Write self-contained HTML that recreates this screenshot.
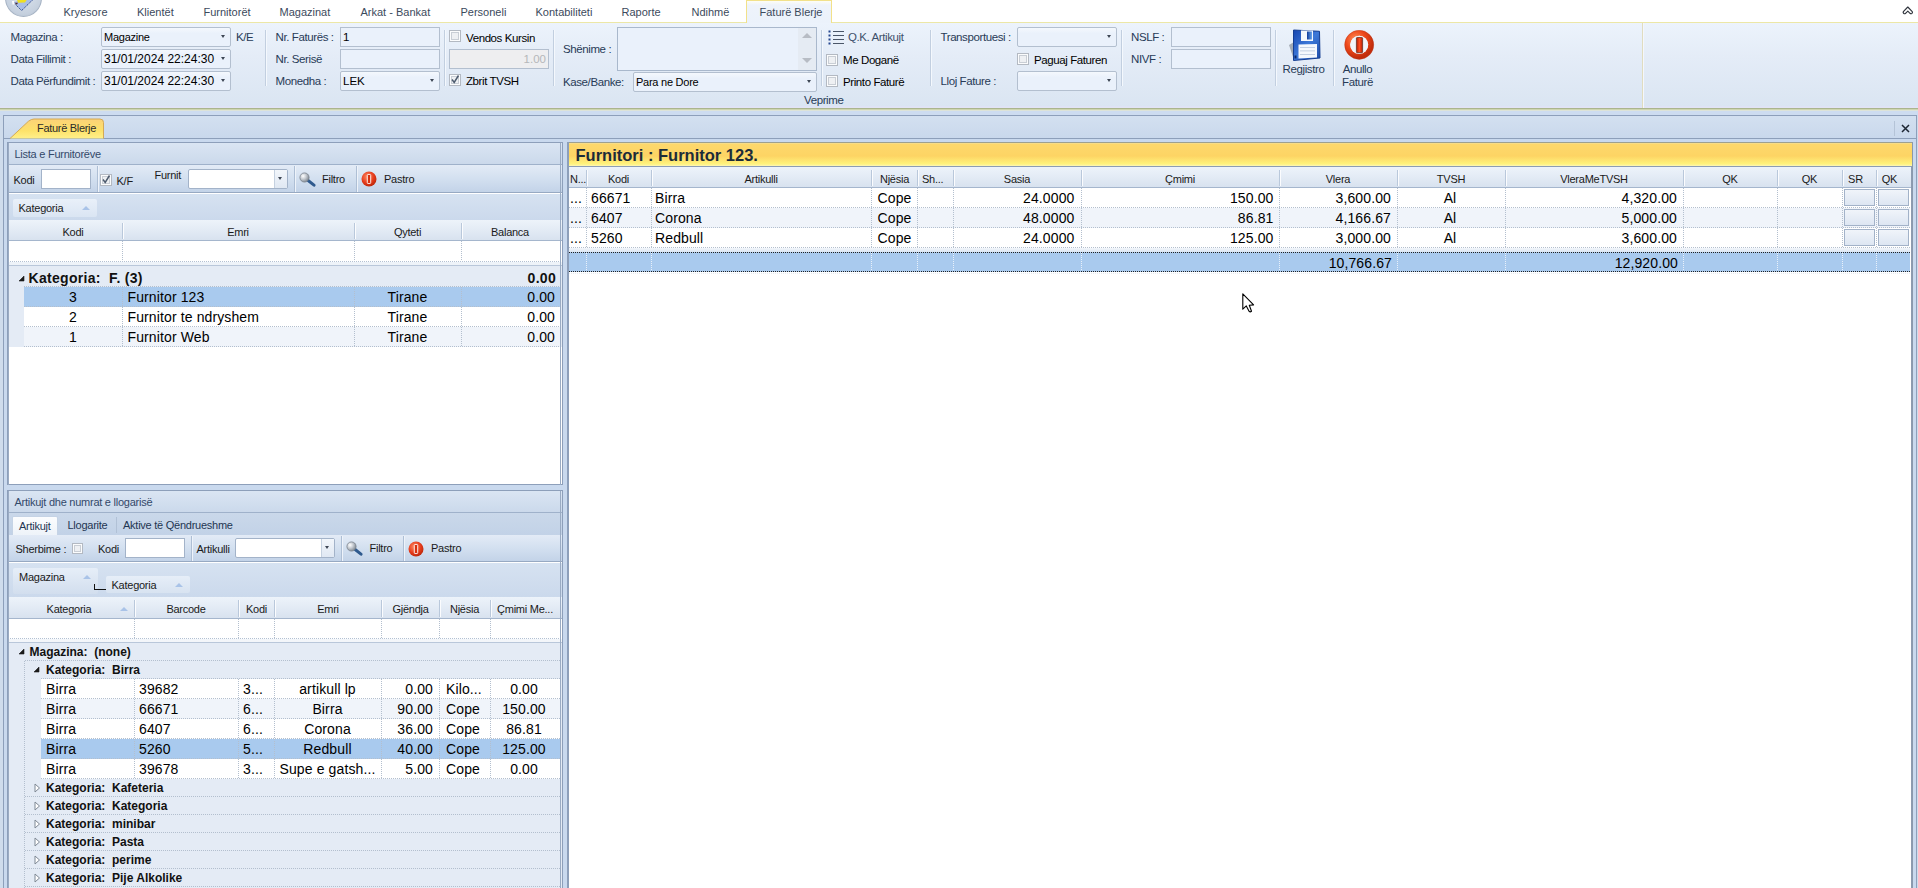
<!DOCTYPE html>
<html><head><meta charset="utf-8"><style>
*{box-sizing:border-box}
html,body{margin:0;padding:0}
body{width:1918px;height:888px;overflow:hidden;position:relative;background:#cfdcec;font-family:"Liberation Sans",sans-serif}
body div{position:absolute}
.t{white-space:pre}
.cb{border:1px solid #a5b3c6;background:linear-gradient(#f4f6f9,#e6eaf0)}
.inp{border:1px solid #a9b8cc;background:#eaf1fb;border-radius:2px}
.inpw{border:1px solid #a9b8cc;background:#fff}
.dd{width:0;height:0;border-left:2.5px solid transparent;border-right:2.5px solid transparent;border-top:3px solid #3d4654}
</style></head><body>
<div style="left:0px;top:0px;width:1918px;height:22px;background:#fff"></div>
<div style="left:5px;top:-21px;width:37px;height:38px;border-radius:50%;background:radial-gradient(circle at 50% 40%,#dde5ef 0%,#c5d0de 70%,#aebbcc 100%);border:1px solid #a6b3c4"></div>
<svg style="position:absolute;left:0px;top:0px" width="46" height="18" viewBox="0 0 46 18">
<path d="M14 2.5 L21.6 10.6 L33 -0.5 L20 -0.5 Z" fill="#a9bde6"/>
<path d="M15.5 4.5 L21.6 10.6 L33 -0.5" fill="none" stroke="#2d4a8a" stroke-width="1" stroke-dasharray="1.5 0.8"/>
<path d="M17 -0.5 L27 -0.5 L25 2.6 L18 2.8 Z" fill="#f0e020"/>
<path d="M14.5 2.8 L18 2.8 L16.8 4.8 Z" fill="#4a2a36"/>
<path d="M12 1 L14 1 L14 4.6 L12.5 4.6 Z" fill="#ffffff" opacity="0.9"/>
</svg>
<div class="t" style="left:63.5px;top:6.5px;font-size:11px;line-height:11px;color:#3c4a5c;">Kryesore</div>
<div class="t" style="left:137px;top:6.5px;font-size:11px;line-height:11px;color:#3c4a5c;">Klientët</div>
<div class="t" style="left:203.5px;top:6.5px;font-size:11px;line-height:11px;color:#3c4a5c;">Furnitorët</div>
<div class="t" style="left:279.5px;top:6.5px;font-size:11px;line-height:11px;color:#3c4a5c;">Magazinat</div>
<div class="t" style="left:360.5px;top:6.5px;font-size:11px;line-height:11px;color:#3c4a5c;">Arkat - Bankat</div>
<div class="t" style="left:460.5px;top:6.5px;font-size:11px;line-height:11px;color:#3c4a5c;">Personeli</div>
<div class="t" style="left:535.5px;top:6.5px;font-size:11px;line-height:11px;color:#3c4a5c;">Kontabiliteti</div>
<div class="t" style="left:621.5px;top:6.5px;font-size:11px;line-height:11px;color:#3c4a5c;">Raporte</div>
<div class="t" style="left:691.5px;top:6.5px;font-size:11px;line-height:11px;color:#3c4a5c;">Ndihmë</div>
<div style="left:746px;top:0px;width:86px;height:24px;border:1px solid #f2e18a;border-bottom:none;background:linear-gradient(#fdfdf6 0px,#eef3fb 4px,#ebf2fb 100%)"></div>
<div class="t" style="left:759.5px;top:6.5px;font-size:11px;line-height:11px;color:#3c4a5c;">Faturë Blerje</div>
<svg style="position:absolute;left:1902px;top:5px" width="12" height="11" viewBox="0 0 12 11"><path d="M1.6 6.3 L5.8 2 L10 6.3 Q11 7.5 9.8 8.5 Q8.9 9.1 8 8.3 L5.8 6.2 L3.6 8.3 Q2.7 9.1 1.8 8.5 Q0.6 7.5 1.6 6.3 Z" fill="#fff" stroke="#2e333b" stroke-width="1.15" stroke-linejoin="round"/></svg>
<div style="left:0px;top:22px;width:746px;height:1px;background:#ece7a6"></div>
<div style="left:832px;top:22px;width:1086px;height:1px;background:#ece7a6"></div>
<div style="left:0px;top:23px;width:1918px;height:85px;background:linear-gradient(#ecf3fc 0%,#e4ecf7 40%,#dae5f2 100%)"></div>
<div style="left:0px;top:106px;width:1918px;height:1px;background:#dfe3f6"></div>
<div style="left:0px;top:107px;width:1918px;height:1px;background:#e2e4f4"></div>
<div style="left:0px;top:108px;width:1918px;height:1px;background:#aab58e"></div>
<div style="left:0px;top:109px;width:1918px;height:1px;background:#cdd5b0"></div>
<div style="left:0px;top:110px;width:1918px;height:1px;background:#dde3d8"></div>
<div style="left:0px;top:111px;width:1918px;height:4px;background:#cddcf0"></div>
<div style="left:265px;top:30px;width:1px;height:56px;background:#c2cfe0"></div>
<div style="left:266px;top:30px;width:1px;height:56px;background:#f4f8fd"></div>
<div style="left:444px;top:30px;width:1px;height:56px;background:#c2cfe0"></div>
<div style="left:445px;top:30px;width:1px;height:56px;background:#f4f8fd"></div>
<div style="left:553px;top:30px;width:1px;height:56px;background:#c2cfe0"></div>
<div style="left:554px;top:30px;width:1px;height:56px;background:#f4f8fd"></div>
<div style="left:821px;top:30px;width:1px;height:56px;background:#c2cfe0"></div>
<div style="left:822px;top:30px;width:1px;height:56px;background:#f4f8fd"></div>
<div style="left:930px;top:30px;width:1px;height:56px;background:#c2cfe0"></div>
<div style="left:931px;top:30px;width:1px;height:56px;background:#f4f8fd"></div>
<div style="left:1121px;top:30px;width:1px;height:56px;background:#c2cfe0"></div>
<div style="left:1122px;top:30px;width:1px;height:56px;background:#f4f8fd"></div>
<div style="left:1275px;top:30px;width:1px;height:56px;background:#c2cfe0"></div>
<div style="left:1276px;top:30px;width:1px;height:56px;background:#f4f8fd"></div>
<div style="left:1333px;top:30px;width:1px;height:56px;background:#c2cfe0"></div>
<div style="left:1334px;top:30px;width:1px;height:56px;background:#f4f8fd"></div>
<div style="left:1642px;top:23px;width:1px;height:85px;background:#e0dcc0"></div>
<div style="left:1643px;top:23px;width:1px;height:85px;background:#f4f7fb"></div>
<div class="t" style="left:10.5px;top:32px;font-size:11.5px;line-height:11.5px;color:#283b57;letter-spacing:-0.4px;">Magazina :</div>
<div class="t" style="left:10.5px;top:54px;font-size:11.5px;line-height:11.5px;color:#283b57;letter-spacing:-0.4px;">Data Fillimit :</div>
<div class="t" style="left:10.5px;top:76px;font-size:11.5px;line-height:11.5px;color:#283b57;letter-spacing:-0.4px;">Data Përfundimit :</div>
<div style="left:101px;top:27px;width:130px;height:20px;border:1px solid #b3bfcf;background:linear-gradient(#f4f8fd,#eaf1fb 30%);border-radius:2px"></div>
<div class="t" style="left:104px;top:32px;font-size:11px;line-height:11px;color:#000;letter-spacing:-0.25px;">Magazine</div>
<div class="dd" style="left:221px;top:35px"></div>
<div style="left:101px;top:49px;width:130px;height:20px;border:1px solid #b3bfcf;background:linear-gradient(#f4f8fd,#eaf1fb 30%);border-radius:2px"></div>
<div class="t" style="left:104px;top:53px;font-size:12px;line-height:12px;color:#000;">31/01/2024 22:24:30</div>
<div class="dd" style="left:221px;top:57px"></div>
<div style="left:101px;top:71px;width:130px;height:20px;border:1px solid #b3bfcf;background:linear-gradient(#f4f8fd,#eaf1fb 30%);border-radius:2px"></div>
<div class="t" style="left:104px;top:75px;font-size:12px;line-height:12px;color:#000;">31/01/2024 22:24:30</div>
<div class="dd" style="left:221px;top:79px"></div>
<div class="t" style="left:236px;top:32px;font-size:11.5px;line-height:11.5px;color:#283b57;letter-spacing:-0.4px;">K/E</div>
<div class="t" style="left:275.5px;top:32px;font-size:11.5px;line-height:11.5px;color:#283b57;letter-spacing:-0.4px;">Nr. Faturës :</div>
<div class="t" style="left:275.5px;top:54px;font-size:11.5px;line-height:11.5px;color:#283b57;letter-spacing:-0.4px;">Nr. Serisë</div>
<div class="t" style="left:275.5px;top:76px;font-size:11.5px;line-height:11.5px;color:#283b57;letter-spacing:-0.4px;">Monedha :</div>
<div style="left:340px;top:27px;width:100px;height:20px;border:1px solid #b3bfcf;background:#eaf1fb"></div>
<div class="t" style="left:343px;top:32px;font-size:11.5px;line-height:11.5px;color:#000;">1</div>
<div style="left:340px;top:49px;width:100px;height:20px;border:1px solid #b3bfcf;background:#eaf1fb"></div>
<div style="left:340px;top:71px;width:100px;height:20px;border:1px solid #b3bfcf;background:linear-gradient(#f4f8fd,#eaf1fb 30%);border-radius:2px"></div>
<div class="t" style="left:343px;top:76px;font-size:11.5px;line-height:11.5px;color:#000;">LEK</div>
<div class="dd" style="left:430px;top:79px"></div>
<div style="left:449px;top:30px;width:12px;height:12px;border:1px solid #b3b9c2;background:#eef0f3;box-shadow:inset 0 0 0 1px #fbfcfd,inset 0 0 0 2px #c9ced5"></div>
<div class="t" style="left:466px;top:33px;font-size:11.5px;line-height:11.5px;color:#000;letter-spacing:-0.4px;">Vendos Kursin</div>
<div style="left:449px;top:49px;width:100px;height:20px;border:1px solid #b3bfcf;background:#eeeef0"></div>
<div class="t" style="left:446px;top:54px;width:100px;text-align:right;font-size:11.5px;line-height:11.5px;color:#b5b7ba;">1.00</div>
<div style="left:449px;top:74px;width:12px;height:12px;border:1px solid #b3b9c2;background:#eef0f3;box-shadow:inset 0 0 0 1px #fbfcfd,inset 0 0 0 2px #c9ced5"></div>
<svg style="position:absolute;left:450px;top:74px" width="10" height="11" viewBox="0 0 10 11"><path d="M2 5.5 L4.2 8.5 L8.5 1.5" fill="none" stroke="#4d5b6e" stroke-width="1.5"/></svg>
<div class="t" style="left:466px;top:76px;font-size:11.5px;line-height:11.5px;color:#000;letter-spacing:-0.4px;">Zbrit TVSH</div>
<div class="t" style="left:563px;top:44px;font-size:11.5px;line-height:11.5px;color:#283b57;letter-spacing:-0.4px;">Shënime :</div>
<div style="left:617px;top:27px;width:200px;height:44px;border:1px solid #a9b8cc;background:#eaf1fb"></div>
<div style="left:798px;top:28px;width:18px;height:42px;background:#e5ebf3"></div>
<div style="left:802px;top:33px;width:0;height:0;border-left:5px solid transparent;border-right:5px solid transparent;border-bottom:5px solid #b7bcc4"></div>
<div style="left:802px;top:58px;width:0;height:0;border-left:5px solid transparent;border-right:5px solid transparent;border-top:5px solid #b7bcc4"></div>
<div class="t" style="left:563px;top:77px;font-size:11.5px;line-height:11.5px;color:#283b57;letter-spacing:-0.4px;">Kase/Banke:</div>
<div style="left:633px;top:72px;width:184px;height:20px;border:1px solid #b3bfcf;background:linear-gradient(#f4f8fd,#eaf1fb 30%);border-radius:2px"></div>
<div class="t" style="left:636px;top:77px;font-size:11px;line-height:11px;color:#000;letter-spacing:-0.25px;">Para ne Dore</div>
<div class="dd" style="left:807px;top:80px"></div>
<div class="t" style="left:804px;top:95px;font-size:11.5px;line-height:11.5px;color:#283b57;letter-spacing:-0.4px;">Veprime</div>
<svg style="position:absolute;left:828px;top:30px" width="17" height="16" viewBox="0 0 17 16"><g fill="#24468f"><rect x="0.5" y="0.5" width="2" height="2"/><rect x="0.5" y="4.5" width="2" height="2"/><rect x="0.5" y="8.5" width="2" height="2"/><rect x="0.5" y="12.5" width="2" height="2"/></g><g fill="#4a5668"><rect x="5" y="1" width="11" height="1"/><rect x="5" y="5" width="11" height="1"/><rect x="5" y="9" width="11" height="1"/><rect x="5" y="13" width="11" height="1"/></g></svg>
<div class="t" style="left:848px;top:32px;font-size:11.5px;line-height:11.5px;color:#3f516b;letter-spacing:-0.4px;">Q.K. Artikujt</div>
<div style="left:826px;top:54px;width:12px;height:12px;border:1px solid #b3b9c2;background:#eef0f3;box-shadow:inset 0 0 0 1px #fbfcfd,inset 0 0 0 2px #c9ced5"></div>
<div class="t" style="left:843px;top:55px;font-size:11.5px;line-height:11.5px;color:#000;letter-spacing:-0.4px;">Me Doganë</div>
<div style="left:826px;top:75px;width:12px;height:12px;border:1px solid #b3b9c2;background:#eef0f3;box-shadow:inset 0 0 0 1px #fbfcfd,inset 0 0 0 2px #c9ced5"></div>
<div class="t" style="left:843px;top:77px;font-size:11.5px;line-height:11.5px;color:#000;letter-spacing:-0.4px;">Printo Faturë</div>
<div class="t" style="left:940.5px;top:32px;font-size:11.5px;line-height:11.5px;color:#283b57;letter-spacing:-0.4px;">Transportuesi :</div>
<div class="t" style="left:940.5px;top:76px;font-size:11.5px;line-height:11.5px;color:#283b57;letter-spacing:-0.4px;">Lloj Fature :</div>
<div style="left:1017px;top:27px;width:100px;height:20px;border:1px solid #b3bfcf;background:linear-gradient(#f4f8fd,#eaf1fb 30%);border-radius:2px"></div>
<div class="dd" style="left:1107px;top:35px"></div>
<div style="left:1017px;top:53px;width:12px;height:12px;border:1px solid #b3b9c2;background:#eef0f3;box-shadow:inset 0 0 0 1px #fbfcfd,inset 0 0 0 2px #c9ced5"></div>
<div class="t" style="left:1034px;top:55px;font-size:11.5px;line-height:11.5px;color:#000;letter-spacing:-0.4px;">Paguaj Faturen</div>
<div style="left:1017px;top:71px;width:100px;height:20px;border:1px solid #b3bfcf;background:linear-gradient(#f4f8fd,#eaf1fb 30%);border-radius:2px"></div>
<div class="dd" style="left:1107px;top:79px"></div>
<div class="t" style="left:1131px;top:32px;font-size:11.5px;line-height:11.5px;color:#283b57;letter-spacing:-0.4px;">NSLF :</div>
<div class="t" style="left:1131px;top:54px;font-size:11.5px;line-height:11.5px;color:#283b57;letter-spacing:-0.4px;">NIVF :</div>
<div style="left:1171px;top:27px;width:100px;height:20px;border:1px solid #b3bfcf;background:#eaf1fb"></div>
<div style="left:1171px;top:49px;width:100px;height:20px;border:1px solid #b3bfcf;background:#eaf1fb"></div>
<svg style="position:absolute;left:1288px;top:29px" width="34" height="33" viewBox="0 0 34 33">
<defs><linearGradient id="fg" x1="0" y1="0" x2="1" y2="1"><stop offset="0" stop-color="#1746b0"/><stop offset="0.5" stop-color="#3c78d8"/><stop offset="1" stop-color="#1d4aa8"/></linearGradient>
<linearGradient id="fs" x1="0" y1="0" x2="1" y2="0"><stop offset="0" stop-color="#0e3a9a"/><stop offset="1" stop-color="#6aa6ee"/></linearGradient></defs>
<path d="M1 16 L6 13 L6 31 Z" fill="#a3abb5"/>
<path d="M5.5 1 L31.5 2.3 L32 29 L5.5 31.5 Z" fill="url(#fg)" stroke="#153e92" stroke-width="1"/>
<rect x="13" y="1.5" width="12" height="10.5" fill="#f4f7fc"/>
<rect x="19" y="2.5" width="5" height="8" fill="url(#fs)"/>
<path d="M10.5 15.5 L29 15 L29 28.5 L10.5 29.5 Z" fill="#f5f8fd"/>
<rect x="12" y="18" width="15" height="0.8" fill="#b8c6dc"/><rect x="12" y="21.5" width="15" height="0.8" fill="#b8c6dc"/><rect x="12" y="25" width="15" height="0.8" fill="#b8c6dc"/>
<rect x="6.5" y="26.5" width="2" height="3" fill="#0b2a6e"/>
</svg>
<svg style="position:absolute;left:1344px;top:30px" width="31" height="30" viewBox="0 0 31 30">
<defs><radialGradient id="rg" cx="35%" cy="30%" r="75%"><stop offset="0" stop-color="#ff9562"/><stop offset="0.55" stop-color="#ef4a1c"/><stop offset="1" stop-color="#c22d0c"/></radialGradient>
<linearGradient id="bg2" x1="0" y1="0" x2="1" y2="0"><stop offset="0" stop-color="#b32008"/><stop offset="0.5" stop-color="#ff4a1e"/><stop offset="1" stop-color="#b32008"/></linearGradient></defs>
<circle cx="15.2" cy="14.8" r="11.8" fill="none" stroke="url(#rg)" stroke-width="5.6"/>
<circle cx="15.2" cy="14.8" r="14.5" fill="none" stroke="#b5391f" stroke-width="0.6" opacity="0.6"/>
<circle cx="15.2" cy="14.8" r="9" fill="#f1f5fb"/>
<rect x="12.4" y="7.5" width="6.2" height="15.2" rx="0.8" fill="url(#bg2)" stroke="#6b3326" stroke-width="0.8"/>
</svg>
<div class="t" style="left:1263.5px;top:64px;width:80px;text-align:center;font-size:11.5px;line-height:11.5px;color:#283b57;letter-spacing:-0.4px;">Regjistro</div>
<div class="t" style="left:1317.5px;top:64px;width:80px;text-align:center;font-size:11.5px;line-height:11.5px;color:#283b57;letter-spacing:-0.4px;">Anullo</div>
<div class="t" style="left:1317.5px;top:77px;width:80px;text-align:center;font-size:11.5px;line-height:11.5px;color:#283b57;letter-spacing:-0.4px;">Faturë</div>
<div style="left:3px;top:115px;width:1914px;height:773px;border:1px solid #8d9fba;border-bottom:none;background:#c9d9ee"></div>
<div style="left:4px;top:116px;width:1912px;height:22px;background:linear-gradient(#d3e0f0,#c9d8ec)"></div>
<div style="left:4px;top:138px;width:1912px;height:1px;background:#8d9fba"></div>
<svg style="position:absolute;left:10px;top:118px" width="96" height="22" viewBox="0 0 96 22">
<defs><linearGradient id="tg" x1="0" y1="0" x2="0" y2="1"><stop offset="0" stop-color="#fcd277"/><stop offset="0.6" stop-color="#fde26a"/><stop offset="1" stop-color="#fff08a"/></linearGradient></defs>
<path d="M0 20.5 L18.5 3.2 Q21.5 1 24 1 L90 1 Q93.5 1 93.5 4.5 L93.5 20.5" fill="url(#tg)" stroke="#d4a955" stroke-width="1"/>
</svg>
<div class="t" style="left:37px;top:123px;font-size:11px;line-height:11px;color:#2b2b2b;letter-spacing:-0.3px;">Faturë Blerje</div>
<div style="left:1894px;top:121px;width:1px;height:15px;background:#b4c3d7"></div>
<svg style="position:absolute;left:1901px;top:123.5px" width="9" height="9" viewBox="0 0 9 9"><path d="M1 1 L8 8 M8 1 L1 8" stroke="#1c2633" stroke-width="1.5"/></svg>
<div style="left:7px;top:142px;width:556px;height:343px;border:1px solid #8d9fba;background:#fff"></div>
<div style="left:8px;top:143px;width:554px;height:21px;background:linear-gradient(#dae5f3,#cbd9eb)"></div>
<div style="left:8px;top:164px;width:554px;height:1px;background:#9fb1ca"></div>
<div class="t" style="left:14.5px;top:149px;font-size:11px;line-height:11px;color:#33496a;letter-spacing:-0.25px;">Lista e Furnitorëve</div>
<div style="left:8px;top:165px;width:554px;height:28px;background:linear-gradient(#e3ebf6 0%,#d3e0f0 50%,#c3d3e8 100%);border-bottom:1px solid #97a9c2"></div>
<div class="t" style="left:13.5px;top:175px;font-size:11px;line-height:11px;color:#1a1a1a;letter-spacing:-0.25px;">Kodi</div>
<div style="left:41px;top:169px;width:50px;height:20px;border:1px solid #a3b3c9;background:#fff"></div>
<div style="left:97px;top:166px;width:1px;height:26px;background:#aebfd5"></div>
<div style="left:98px;top:166px;width:1px;height:26px;background:#eef3fa"></div>
<div style="left:100px;top:174px;width:12px;height:12px;border:1px solid #b3b9c2;background:#eef0f3;box-shadow:inset 0 0 0 1px #fbfcfd,inset 0 0 0 2px #c9ced5"></div>
<svg style="position:absolute;left:101px;top:174px" width="10" height="11" viewBox="0 0 10 11"><path d="M2 5.5 L4.2 8.5 L8.5 1.5" fill="none" stroke="#4d5b6e" stroke-width="1.5"/></svg>
<div class="t" style="left:116.5px;top:175.5px;font-size:11px;line-height:11px;color:#1a1a1a;letter-spacing:-0.25px;">K/F</div>
<div class="t" style="left:154.5px;top:170px;font-size:11px;line-height:11px;color:#1a1a1a;letter-spacing:-0.25px;">Furnit</div>
<div style="left:188px;top:169px;width:100px;height:20px;border:1px solid #a3b3c9;background:#fff;border-radius:2px"></div>
<div style="left:274px;top:170px;width:13px;height:18px;background:linear-gradient(#f2f6fb,#e0e8f3);border-left:1px solid #c5d1e0"></div>
<div class="dd" style="left:278px;top:177px"></div>
<div style="left:294px;top:166px;width:1px;height:26px;background:#aebfd5"></div>
<div style="left:295px;top:166px;width:1px;height:26px;background:#eef3fa"></div>
<svg style="position:absolute;left:299px;top:172px" width="17" height="15" viewBox="0 0 17 15">
<defs><radialGradient id="mg299" cx="35%" cy="35%" r="70%"><stop offset="0" stop-color="#ffffff"/><stop offset="0.45" stop-color="#c9ced4"/><stop offset="1" stop-color="#7d858e"/></radialGradient></defs>
<line x1="8.5" y1="8" x2="15" y2="13.2" stroke="#2f5a8e" stroke-width="3" stroke-linecap="round"/>
<circle cx="5.5" cy="5.5" r="4.6" fill="url(#mg299)" stroke="#7a838d" stroke-width="0.8"/>
</svg>
<div class="t" style="left:322px;top:174px;font-size:11px;line-height:11px;color:#1a1a1a;letter-spacing:-0.25px;">Filtro</div>
<div style="left:356px;top:166px;width:1px;height:26px;background:#aebfd5"></div>
<div style="left:357px;top:166px;width:1px;height:26px;background:#eef3fa"></div>
<svg style="position:absolute;left:361px;top:171px" width="16" height="16" viewBox="0 0 16 16">
<defs><radialGradient id="sg361" cx="40%" cy="35%" r="70%"><stop offset="0" stop-color="#ff8d66"/><stop offset="0.6" stop-color="#e53b1b"/><stop offset="1" stop-color="#b72509"/></radialGradient></defs>
<circle cx="8" cy="8" r="7.5" fill="url(#sg361)"/>
<rect x="6.3" y="3.5" width="3.4" height="9" rx="0.8" fill="#d7310f" stroke="#fff" stroke-width="0.9"/>
</svg>
<div class="t" style="left:384px;top:174px;font-size:11px;line-height:11px;color:#1a1a1a;letter-spacing:-0.25px;">Pastro</div>
<div style="left:8px;top:194px;width:554px;height:26px;background:linear-gradient(#d6e2f1,#cbd9ec)"></div>
<div style="left:13px;top:199px;width:84px;height:18px;background:linear-gradient(#e9f0f9,#dae5f3);border-radius:2px"></div>
<div class="t" style="left:18.5px;top:203px;font-size:11px;line-height:11px;color:#1a1a1a;letter-spacing:-0.25px;">Kategoria</div>
<div style="left:82px;top:206px;width:0;height:0;border-left:4px solid transparent;border-right:4px solid transparent;border-bottom:4px solid #a9c3e8"></div>
<div style="left:8px;top:220px;width:554px;height:20px;background:linear-gradient(#edf3fa 0%,#e3ebf5 50%,#d8e2ef 100%)"></div>
<div style="left:8px;top:240px;width:554px;height:1px;background:#a5b6cd"></div>
<div style="left:122px;top:223px;width:1px;height:16px;background:#b9c8db"></div>
<div style="left:123px;top:223px;width:1px;height:16px;background:#fbfcfe"></div>
<div style="left:354px;top:223px;width:1px;height:16px;background:#b9c8db"></div>
<div style="left:355px;top:223px;width:1px;height:16px;background:#fbfcfe"></div>
<div style="left:461px;top:223px;width:1px;height:16px;background:#b9c8db"></div>
<div style="left:462px;top:223px;width:1px;height:16px;background:#fbfcfe"></div>
<div class="t" style="left:13.0px;top:227px;width:120px;text-align:center;font-size:11px;line-height:11px;color:#1a1a1a;letter-spacing:-0.25px;">Kodi</div>
<div class="t" style="left:178.0px;top:227px;width:120px;text-align:center;font-size:11px;line-height:11px;color:#1a1a1a;letter-spacing:-0.25px;">Emri</div>
<div class="t" style="left:347.5px;top:227px;width:120px;text-align:center;font-size:11px;line-height:11px;color:#1a1a1a;letter-spacing:-0.25px;">Qyteti</div>
<div class="t" style="left:450.0px;top:227px;width:120px;text-align:center;font-size:11px;line-height:11px;color:#1a1a1a;letter-spacing:-0.25px;">Balanca</div>
<div style="left:122px;top:241px;width:1px;height:20px;background-image:linear-gradient(to bottom,#b3bfce 50%,transparent 50%);background-size:1px 2px"></div>
<div style="left:354px;top:241px;width:1px;height:20px;background-image:linear-gradient(to bottom,#b3bfce 50%,transparent 50%);background-size:1px 2px"></div>
<div style="left:461px;top:241px;width:1px;height:20px;background-image:linear-gradient(to bottom,#b3bfce 50%,transparent 50%);background-size:1px 2px"></div>
<div style="left:8px;top:261px;width:554px;height:1px;background-image:linear-gradient(to right,#b3c1d3 50%,transparent 50%);background-size:2px 1px"></div>
<div style="left:8px;top:262px;width:554px;height:3px;background:#eef3f9"></div>
<div style="left:8px;top:265px;width:554px;height:1px;background:#b9c7da"></div>
<div style="left:8px;top:266px;width:554px;height:81px;background:#e4ebf5"></div>
<svg style="position:absolute;left:18px;top:275px" width="7" height="7" viewBox="0 0 7 7"><path d="M6 1 L6 6 L1 6 Z" fill="#1b1b1b" stroke="#1b1b1b" stroke-width="0.6"/></svg>
<div class="t" style="left:28.5px;top:271px;font-size:14px;line-height:14px;font-weight:bold;color:#111;letter-spacing:0.3px;">Kategoria:  F. (3)</div>
<div class="t" style="left:456px;top:271px;width:100px;text-align:right;font-size:14px;line-height:14px;font-weight:bold;color:#111;letter-spacing:0.3px;">0.00</div>
<div style="left:24px;top:287px;width:537px;height:20px;background:#a9caee"></div>
<div style="left:24px;top:286px;width:537px;height:1px;background-image:linear-gradient(to right,#b3bfce 50%,transparent 50%);background-size:2px 1px"></div>
<div style="left:122px;top:287px;width:1px;height:20px;background-image:linear-gradient(to bottom,#b3bfce 50%,transparent 50%);background-size:1px 2px"></div>
<div style="left:354px;top:287px;width:1px;height:20px;background-image:linear-gradient(to bottom,#b3bfce 50%,transparent 50%);background-size:1px 2px"></div>
<div style="left:461px;top:287px;width:1px;height:20px;background-image:linear-gradient(to bottom,#b3bfce 50%,transparent 50%);background-size:1px 2px"></div>
<div class="t" style="left:43.0px;top:290px;width:60px;text-align:center;font-size:14px;line-height:14px;color:#000;letter-spacing:0.12px;">3</div>
<div class="t" style="left:127.5px;top:290px;font-size:14px;line-height:14px;color:#000;letter-spacing:0.12px;">Furnitor 123</div>
<div class="t" style="left:347.5px;top:290px;width:120px;text-align:center;font-size:14px;line-height:14px;color:#000;letter-spacing:0.12px;">Tirane</div>
<div class="t" style="left:455px;top:290px;width:100px;text-align:right;font-size:14px;line-height:14px;color:#000;letter-spacing:0.12px;">0.00</div>
<div style="left:24px;top:307px;width:537px;height:20px;background:#fff"></div>
<div style="left:24px;top:306px;width:537px;height:1px;background-image:linear-gradient(to right,#b3bfce 50%,transparent 50%);background-size:2px 1px"></div>
<div style="left:122px;top:307px;width:1px;height:20px;background-image:linear-gradient(to bottom,#b3bfce 50%,transparent 50%);background-size:1px 2px"></div>
<div style="left:354px;top:307px;width:1px;height:20px;background-image:linear-gradient(to bottom,#b3bfce 50%,transparent 50%);background-size:1px 2px"></div>
<div style="left:461px;top:307px;width:1px;height:20px;background-image:linear-gradient(to bottom,#b3bfce 50%,transparent 50%);background-size:1px 2px"></div>
<div class="t" style="left:43.0px;top:310px;width:60px;text-align:center;font-size:14px;line-height:14px;color:#000;letter-spacing:0.12px;">2</div>
<div class="t" style="left:127.5px;top:310px;font-size:14px;line-height:14px;color:#000;letter-spacing:0.12px;">Furnitor te ndryshem</div>
<div class="t" style="left:347.5px;top:310px;width:120px;text-align:center;font-size:14px;line-height:14px;color:#000;letter-spacing:0.12px;">Tirane</div>
<div class="t" style="left:455px;top:310px;width:100px;text-align:right;font-size:14px;line-height:14px;color:#000;letter-spacing:0.12px;">0.00</div>
<div style="left:24px;top:327px;width:537px;height:20px;background:#f0f4fa"></div>
<div style="left:24px;top:326px;width:537px;height:1px;background-image:linear-gradient(to right,#b3bfce 50%,transparent 50%);background-size:2px 1px"></div>
<div style="left:122px;top:327px;width:1px;height:20px;background-image:linear-gradient(to bottom,#b3bfce 50%,transparent 50%);background-size:1px 2px"></div>
<div style="left:354px;top:327px;width:1px;height:20px;background-image:linear-gradient(to bottom,#b3bfce 50%,transparent 50%);background-size:1px 2px"></div>
<div style="left:461px;top:327px;width:1px;height:20px;background-image:linear-gradient(to bottom,#b3bfce 50%,transparent 50%);background-size:1px 2px"></div>
<div class="t" style="left:43.0px;top:330px;width:60px;text-align:center;font-size:14px;line-height:14px;color:#000;letter-spacing:0.12px;">1</div>
<div class="t" style="left:127.5px;top:330px;font-size:14px;line-height:14px;color:#000;letter-spacing:0.12px;">Furnitor Web</div>
<div class="t" style="left:347.5px;top:330px;width:120px;text-align:center;font-size:14px;line-height:14px;color:#000;letter-spacing:0.12px;">Tirane</div>
<div class="t" style="left:455px;top:330px;width:100px;text-align:right;font-size:14px;line-height:14px;color:#000;letter-spacing:0.12px;">0.00</div>
<div style="left:24px;top:346px;width:537px;height:1px;background-image:linear-gradient(to right,#b3bfce 50%,transparent 50%);background-size:2px 1px"></div>
<div style="left:7px;top:485px;width:556px;height:5px;background:#c9d9ee"></div>
<div style="left:7px;top:490px;width:556px;height:398px;border:1px solid #8d9fba;border-bottom:none;background:#fff"></div>
<div style="left:8px;top:491px;width:554px;height:21px;background:linear-gradient(#dae5f3,#cbd9eb)"></div>
<div style="left:8px;top:512px;width:554px;height:1px;background:#9fb1ca"></div>
<div class="t" style="left:14.5px;top:497px;font-size:11px;line-height:11px;color:#33496a;letter-spacing:-0.25px;">Artikujt dhe numrat e llogarisë</div>
<div style="left:8px;top:513px;width:554px;height:22px;background:linear-gradient(#cad8ea,#c2d2e7)"></div>
<div style="left:12px;top:516px;width:46px;height:19px;background:linear-gradient(#fbfcfe,#eef3f9);border-radius:2px 2px 0 0;border:1px solid #c5d3e5;border-bottom:none"></div>
<div class="t" style="left:19px;top:521px;font-size:11px;line-height:11px;color:#1f3552;letter-spacing:-0.25px;">Artikujt</div>
<div class="t" style="left:67.5px;top:520px;font-size:11px;line-height:11px;color:#1f3552;letter-spacing:-0.25px;">Llogarite</div>
<div style="left:116px;top:517px;width:1px;height:16px;background:#b1c1d6"></div>
<div class="t" style="left:123px;top:520px;font-size:11px;line-height:11px;color:#1f3552;letter-spacing:-0.25px;">Aktive të Qëndrueshme</div>
<div style="left:8px;top:535px;width:554px;height:27px;background:linear-gradient(#e3ebf6 0%,#d3e0f0 50%,#c3d3e8 100%);border-bottom:1px solid #97a9c2"></div>
<div class="t" style="left:15.5px;top:544px;font-size:11px;line-height:11px;color:#1a1a1a;letter-spacing:-0.25px;">Sherbime :</div>
<div style="left:72px;top:543px;width:11px;height:11px;border:1px solid #b3b9c2;background:#eef0f3;box-shadow:inset 0 0 0 1px #fbfcfd,inset 0 0 0 2px #c9ced5"></div>
<div class="t" style="left:98px;top:544px;font-size:11px;line-height:11px;color:#1a1a1a;letter-spacing:-0.25px;">Kodi</div>
<div style="left:125px;top:538px;width:60px;height:20px;border:1px solid #a3b3c9;background:#fff"></div>
<div style="left:191px;top:536px;width:1px;height:25px;background:#aebfd5"></div>
<div style="left:192px;top:536px;width:1px;height:25px;background:#eef3fa"></div>
<div class="t" style="left:196.5px;top:544px;font-size:11px;line-height:11px;color:#1a1a1a;letter-spacing:-0.25px;">Artikulli</div>
<div style="left:235px;top:538px;width:100px;height:20px;border:1px solid #a3b3c9;background:#fff;border-radius:2px"></div>
<div style="left:321px;top:539px;width:13px;height:18px;background:linear-gradient(#f2f6fb,#e0e8f3);border-left:1px solid #c5d1e0"></div>
<div class="dd" style="left:325px;top:546px"></div>
<div style="left:341px;top:536px;width:1px;height:25px;background:#aebfd5"></div>
<div style="left:342px;top:536px;width:1px;height:25px;background:#eef3fa"></div>
<svg style="position:absolute;left:346px;top:541px" width="17" height="15" viewBox="0 0 17 15">
<defs><radialGradient id="mg346" cx="35%" cy="35%" r="70%"><stop offset="0" stop-color="#ffffff"/><stop offset="0.45" stop-color="#c9ced4"/><stop offset="1" stop-color="#7d858e"/></radialGradient></defs>
<line x1="8.5" y1="8" x2="15" y2="13.2" stroke="#2f5a8e" stroke-width="3" stroke-linecap="round"/>
<circle cx="5.5" cy="5.5" r="4.6" fill="url(#mg346)" stroke="#7a838d" stroke-width="0.8"/>
</svg>
<div class="t" style="left:369.5px;top:543px;font-size:11px;line-height:11px;color:#1a1a1a;letter-spacing:-0.25px;">Filtro</div>
<div style="left:403px;top:536px;width:1px;height:25px;background:#aebfd5"></div>
<div style="left:404px;top:536px;width:1px;height:25px;background:#eef3fa"></div>
<svg style="position:absolute;left:408px;top:541px" width="16" height="16" viewBox="0 0 16 16">
<defs><radialGradient id="sg408" cx="40%" cy="35%" r="70%"><stop offset="0" stop-color="#ff8d66"/><stop offset="0.6" stop-color="#e53b1b"/><stop offset="1" stop-color="#b72509"/></radialGradient></defs>
<circle cx="8" cy="8" r="7.5" fill="url(#sg408)"/>
<rect x="6.3" y="3.5" width="3.4" height="9" rx="0.8" fill="#d7310f" stroke="#fff" stroke-width="0.9"/>
</svg>
<div class="t" style="left:431px;top:543px;font-size:11px;line-height:11px;color:#1a1a1a;letter-spacing:-0.25px;">Pastro</div>
<div style="left:8px;top:563px;width:554px;height:34px;background:linear-gradient(#d6e2f1,#cbd9ec)"></div>
<div style="left:13px;top:568px;width:85px;height:26px;background:linear-gradient(#e6eef8,#d2deee);border-radius:2px"></div>
<div class="t" style="left:19px;top:572px;font-size:11px;line-height:11px;color:#1a1a1a;letter-spacing:-0.25px;">Magazina</div>
<div style="left:83px;top:575px;width:0;height:0;border-left:4px solid transparent;border-right:4px solid transparent;border-bottom:4px solid #a9c3e8"></div>
<div style="left:106px;top:576px;width:84px;height:17px;background:linear-gradient(#e6eef8,#d8e3f1);border-radius:2px"></div>
<div class="t" style="left:111.5px;top:580px;font-size:11px;line-height:11px;color:#1a1a1a;letter-spacing:-0.25px;">Kategoria</div>
<div style="left:175px;top:583px;width:0;height:0;border-left:4px solid transparent;border-right:4px solid transparent;border-bottom:4px solid #a9c3e8"></div>
<div style="left:94px;top:584px;width:12px;height:6px;border-left:1.5px solid #111;border-bottom:1.5px solid #111"></div>
<div style="left:8px;top:597px;width:554px;height:21px;background:linear-gradient(#edf3fa 0%,#e3ebf5 50%,#d8e2ef 100%)"></div>
<div style="left:8px;top:618px;width:554px;height:1px;background:#a5b6cd"></div>
<div style="left:134px;top:600px;width:1px;height:17px;background:#b9c8db"></div>
<div style="left:135px;top:600px;width:1px;height:17px;background:#fbfcfe"></div>
<div style="left:238px;top:600px;width:1px;height:17px;background:#b9c8db"></div>
<div style="left:239px;top:600px;width:1px;height:17px;background:#fbfcfe"></div>
<div style="left:274px;top:600px;width:1px;height:17px;background:#b9c8db"></div>
<div style="left:275px;top:600px;width:1px;height:17px;background:#fbfcfe"></div>
<div style="left:381px;top:600px;width:1px;height:17px;background:#b9c8db"></div>
<div style="left:382px;top:600px;width:1px;height:17px;background:#fbfcfe"></div>
<div style="left:439px;top:600px;width:1px;height:17px;background:#b9c8db"></div>
<div style="left:440px;top:600px;width:1px;height:17px;background:#fbfcfe"></div>
<div style="left:490px;top:600px;width:1px;height:17px;background:#b9c8db"></div>
<div style="left:491px;top:600px;width:1px;height:17px;background:#fbfcfe"></div>
<div class="t" style="left:9.0px;top:604px;width:120px;text-align:center;font-size:11px;line-height:11px;color:#1a1a1a;letter-spacing:-0.25px;">Kategoria</div>
<div class="t" style="left:126.0px;top:604px;width:120px;text-align:center;font-size:11px;line-height:11px;color:#1a1a1a;letter-spacing:-0.25px;">Barcode</div>
<div class="t" style="left:196.5px;top:604px;width:120px;text-align:center;font-size:11px;line-height:11px;color:#1a1a1a;letter-spacing:-0.25px;">Kodi</div>
<div class="t" style="left:268.0px;top:604px;width:120px;text-align:center;font-size:11px;line-height:11px;color:#1a1a1a;letter-spacing:-0.25px;">Emri</div>
<div class="t" style="left:350.5px;top:604px;width:120px;text-align:center;font-size:11px;line-height:11px;color:#1a1a1a;letter-spacing:-0.25px;">Gjëndja</div>
<div class="t" style="left:404.5px;top:604px;width:120px;text-align:center;font-size:11px;line-height:11px;color:#1a1a1a;letter-spacing:-0.25px;">Njësia</div>
<div class="t" style="left:465.0px;top:604px;width:120px;text-align:center;font-size:11px;line-height:11px;color:#1a1a1a;letter-spacing:-0.25px;">Çmimi Me...</div>
<div style="left:120px;top:607px;width:0;height:0;border-left:4px solid transparent;border-right:4px solid transparent;border-bottom:4px solid #a9c3e8"></div>
<div style="left:134px;top:619px;width:1px;height:19px;background-image:linear-gradient(to bottom,#b3bfce 50%,transparent 50%);background-size:1px 2px"></div>
<div style="left:238px;top:619px;width:1px;height:19px;background-image:linear-gradient(to bottom,#b3bfce 50%,transparent 50%);background-size:1px 2px"></div>
<div style="left:274px;top:619px;width:1px;height:19px;background-image:linear-gradient(to bottom,#b3bfce 50%,transparent 50%);background-size:1px 2px"></div>
<div style="left:381px;top:619px;width:1px;height:19px;background-image:linear-gradient(to bottom,#b3bfce 50%,transparent 50%);background-size:1px 2px"></div>
<div style="left:439px;top:619px;width:1px;height:19px;background-image:linear-gradient(to bottom,#b3bfce 50%,transparent 50%);background-size:1px 2px"></div>
<div style="left:490px;top:619px;width:1px;height:19px;background-image:linear-gradient(to bottom,#b3bfce 50%,transparent 50%);background-size:1px 2px"></div>
<div style="left:8px;top:638px;width:554px;height:1px;background-image:linear-gradient(to right,#b3c1d3 50%,transparent 50%);background-size:2px 1px"></div>
<div style="left:8px;top:639px;width:554px;height:3px;background:#f3f6fa"></div>
<div style="left:8px;top:642px;width:554px;height:1px;background:#b9c7da"></div>
<div style="left:8px;top:643px;width:554px;height:245px;background:#e4ebf5"></div>
<svg style="position:absolute;left:18px;top:648px" width="7" height="7" viewBox="0 0 7 7"><path d="M6 1 L6 6 L1 6 Z" fill="#1b1b1b" stroke="#1b1b1b" stroke-width="0.6"/></svg>
<div class="t" style="left:29.5px;top:646px;font-size:12px;line-height:12px;font-weight:bold;color:#111;">Magazina:  (none)</div>
<div style="left:25px;top:660px;width:536px;height:1px;background-image:linear-gradient(to right,#b3bfce 50%,transparent 50%);background-size:2px 1px"></div>
<svg style="position:absolute;left:33px;top:666px" width="7" height="7" viewBox="0 0 7 7"><path d="M6 1 L6 6 L1 6 Z" fill="#1b1b1b" stroke="#1b1b1b" stroke-width="0.6"/></svg>
<div class="t" style="left:46px;top:664px;font-size:12px;line-height:12px;font-weight:bold;color:#111;">Kategoria:  Birra</div>
<div style="left:41px;top:678px;width:520px;height:1px;background-image:linear-gradient(to right,#b3bfce 50%,transparent 50%);background-size:2px 1px"></div>
<div style="left:41px;top:679px;width:520px;height:20px;background:#fff"></div>
<div style="left:41px;top:698px;width:520px;height:1px;background-image:linear-gradient(to right,#b3bfce 50%,transparent 50%);background-size:2px 1px"></div>
<div style="left:134px;top:679px;width:1px;height:20px;background-image:linear-gradient(to bottom,#b3bfce 50%,transparent 50%);background-size:1px 2px"></div>
<div style="left:238px;top:679px;width:1px;height:20px;background-image:linear-gradient(to bottom,#b3bfce 50%,transparent 50%);background-size:1px 2px"></div>
<div style="left:274px;top:679px;width:1px;height:20px;background-image:linear-gradient(to bottom,#b3bfce 50%,transparent 50%);background-size:1px 2px"></div>
<div style="left:381px;top:679px;width:1px;height:20px;background-image:linear-gradient(to bottom,#b3bfce 50%,transparent 50%);background-size:1px 2px"></div>
<div style="left:439px;top:679px;width:1px;height:20px;background-image:linear-gradient(to bottom,#b3bfce 50%,transparent 50%);background-size:1px 2px"></div>
<div style="left:490px;top:679px;width:1px;height:20px;background-image:linear-gradient(to bottom,#b3bfce 50%,transparent 50%);background-size:1px 2px"></div>
<div class="t" style="left:46px;top:682px;font-size:14px;line-height:14px;color:#000;letter-spacing:0.12px;">Birra</div>
<div class="t" style="left:139px;top:682px;font-size:14px;line-height:14px;color:#000;letter-spacing:0.12px;">39682</div>
<div class="t" style="left:243px;top:682px;font-size:14px;line-height:14px;color:#000;letter-spacing:0.12px;">3...</div>
<div class="t" style="left:272.5px;top:682px;width:110px;text-align:center;font-size:14px;line-height:14px;color:#000;letter-spacing:0.12px;">artikull lp</div>
<div class="t" style="left:373px;top:682px;width:60px;text-align:right;font-size:14px;line-height:14px;color:#000;letter-spacing:0.12px;">0.00</div>
<div class="t" style="left:446px;top:682px;font-size:14px;line-height:14px;color:#000;letter-spacing:0.12px;">Kilo...</div>
<div class="t" style="left:489.0px;top:682px;width:70px;text-align:center;font-size:14px;line-height:14px;color:#000;letter-spacing:0.12px;">0.00</div>
<div style="left:41px;top:699px;width:520px;height:20px;background:#f0f4fa"></div>
<div style="left:41px;top:718px;width:520px;height:1px;background-image:linear-gradient(to right,#b3bfce 50%,transparent 50%);background-size:2px 1px"></div>
<div style="left:134px;top:699px;width:1px;height:20px;background-image:linear-gradient(to bottom,#b3bfce 50%,transparent 50%);background-size:1px 2px"></div>
<div style="left:238px;top:699px;width:1px;height:20px;background-image:linear-gradient(to bottom,#b3bfce 50%,transparent 50%);background-size:1px 2px"></div>
<div style="left:274px;top:699px;width:1px;height:20px;background-image:linear-gradient(to bottom,#b3bfce 50%,transparent 50%);background-size:1px 2px"></div>
<div style="left:381px;top:699px;width:1px;height:20px;background-image:linear-gradient(to bottom,#b3bfce 50%,transparent 50%);background-size:1px 2px"></div>
<div style="left:439px;top:699px;width:1px;height:20px;background-image:linear-gradient(to bottom,#b3bfce 50%,transparent 50%);background-size:1px 2px"></div>
<div style="left:490px;top:699px;width:1px;height:20px;background-image:linear-gradient(to bottom,#b3bfce 50%,transparent 50%);background-size:1px 2px"></div>
<div class="t" style="left:46px;top:702px;font-size:14px;line-height:14px;color:#000;letter-spacing:0.12px;">Birra</div>
<div class="t" style="left:139px;top:702px;font-size:14px;line-height:14px;color:#000;letter-spacing:0.12px;">66671</div>
<div class="t" style="left:243px;top:702px;font-size:14px;line-height:14px;color:#000;letter-spacing:0.12px;">6...</div>
<div class="t" style="left:272.5px;top:702px;width:110px;text-align:center;font-size:14px;line-height:14px;color:#000;letter-spacing:0.12px;">Birra</div>
<div class="t" style="left:373px;top:702px;width:60px;text-align:right;font-size:14px;line-height:14px;color:#000;letter-spacing:0.12px;">90.00</div>
<div class="t" style="left:446px;top:702px;font-size:14px;line-height:14px;color:#000;letter-spacing:0.12px;">Cope</div>
<div class="t" style="left:489.0px;top:702px;width:70px;text-align:center;font-size:14px;line-height:14px;color:#000;letter-spacing:0.12px;">150.00</div>
<div style="left:41px;top:719px;width:520px;height:20px;background:#fff"></div>
<div style="left:41px;top:738px;width:520px;height:1px;background-image:linear-gradient(to right,#b3bfce 50%,transparent 50%);background-size:2px 1px"></div>
<div style="left:134px;top:719px;width:1px;height:20px;background-image:linear-gradient(to bottom,#b3bfce 50%,transparent 50%);background-size:1px 2px"></div>
<div style="left:238px;top:719px;width:1px;height:20px;background-image:linear-gradient(to bottom,#b3bfce 50%,transparent 50%);background-size:1px 2px"></div>
<div style="left:274px;top:719px;width:1px;height:20px;background-image:linear-gradient(to bottom,#b3bfce 50%,transparent 50%);background-size:1px 2px"></div>
<div style="left:381px;top:719px;width:1px;height:20px;background-image:linear-gradient(to bottom,#b3bfce 50%,transparent 50%);background-size:1px 2px"></div>
<div style="left:439px;top:719px;width:1px;height:20px;background-image:linear-gradient(to bottom,#b3bfce 50%,transparent 50%);background-size:1px 2px"></div>
<div style="left:490px;top:719px;width:1px;height:20px;background-image:linear-gradient(to bottom,#b3bfce 50%,transparent 50%);background-size:1px 2px"></div>
<div class="t" style="left:46px;top:722px;font-size:14px;line-height:14px;color:#000;letter-spacing:0.12px;">Birra</div>
<div class="t" style="left:139px;top:722px;font-size:14px;line-height:14px;color:#000;letter-spacing:0.12px;">6407</div>
<div class="t" style="left:243px;top:722px;font-size:14px;line-height:14px;color:#000;letter-spacing:0.12px;">6...</div>
<div class="t" style="left:272.5px;top:722px;width:110px;text-align:center;font-size:14px;line-height:14px;color:#000;letter-spacing:0.12px;">Corona</div>
<div class="t" style="left:373px;top:722px;width:60px;text-align:right;font-size:14px;line-height:14px;color:#000;letter-spacing:0.12px;">36.00</div>
<div class="t" style="left:446px;top:722px;font-size:14px;line-height:14px;color:#000;letter-spacing:0.12px;">Cope</div>
<div class="t" style="left:489.0px;top:722px;width:70px;text-align:center;font-size:14px;line-height:14px;color:#000;letter-spacing:0.12px;">86.81</div>
<div style="left:41px;top:739px;width:520px;height:20px;background:#a9caee"></div>
<div style="left:41px;top:758px;width:520px;height:1px;background-image:linear-gradient(to right,#b3bfce 50%,transparent 50%);background-size:2px 1px"></div>
<div style="left:134px;top:739px;width:1px;height:20px;background-image:linear-gradient(to bottom,#b3bfce 50%,transparent 50%);background-size:1px 2px"></div>
<div style="left:238px;top:739px;width:1px;height:20px;background-image:linear-gradient(to bottom,#b3bfce 50%,transparent 50%);background-size:1px 2px"></div>
<div style="left:274px;top:739px;width:1px;height:20px;background-image:linear-gradient(to bottom,#b3bfce 50%,transparent 50%);background-size:1px 2px"></div>
<div style="left:381px;top:739px;width:1px;height:20px;background-image:linear-gradient(to bottom,#b3bfce 50%,transparent 50%);background-size:1px 2px"></div>
<div style="left:439px;top:739px;width:1px;height:20px;background-image:linear-gradient(to bottom,#b3bfce 50%,transparent 50%);background-size:1px 2px"></div>
<div style="left:490px;top:739px;width:1px;height:20px;background-image:linear-gradient(to bottom,#b3bfce 50%,transparent 50%);background-size:1px 2px"></div>
<div class="t" style="left:46px;top:742px;font-size:14px;line-height:14px;color:#000;letter-spacing:0.12px;">Birra</div>
<div class="t" style="left:139px;top:742px;font-size:14px;line-height:14px;color:#000;letter-spacing:0.12px;">5260</div>
<div class="t" style="left:243px;top:742px;font-size:14px;line-height:14px;color:#000;letter-spacing:0.12px;">5...</div>
<div class="t" style="left:272.5px;top:742px;width:110px;text-align:center;font-size:14px;line-height:14px;color:#000;letter-spacing:0.12px;">Redbull</div>
<div class="t" style="left:373px;top:742px;width:60px;text-align:right;font-size:14px;line-height:14px;color:#000;letter-spacing:0.12px;">40.00</div>
<div class="t" style="left:446px;top:742px;font-size:14px;line-height:14px;color:#000;letter-spacing:0.12px;">Cope</div>
<div class="t" style="left:489.0px;top:742px;width:70px;text-align:center;font-size:14px;line-height:14px;color:#000;letter-spacing:0.12px;">125.00</div>
<div style="left:41px;top:759px;width:520px;height:20px;background:#fff"></div>
<div style="left:41px;top:778px;width:520px;height:1px;background-image:linear-gradient(to right,#b3bfce 50%,transparent 50%);background-size:2px 1px"></div>
<div style="left:134px;top:759px;width:1px;height:20px;background-image:linear-gradient(to bottom,#b3bfce 50%,transparent 50%);background-size:1px 2px"></div>
<div style="left:238px;top:759px;width:1px;height:20px;background-image:linear-gradient(to bottom,#b3bfce 50%,transparent 50%);background-size:1px 2px"></div>
<div style="left:274px;top:759px;width:1px;height:20px;background-image:linear-gradient(to bottom,#b3bfce 50%,transparent 50%);background-size:1px 2px"></div>
<div style="left:381px;top:759px;width:1px;height:20px;background-image:linear-gradient(to bottom,#b3bfce 50%,transparent 50%);background-size:1px 2px"></div>
<div style="left:439px;top:759px;width:1px;height:20px;background-image:linear-gradient(to bottom,#b3bfce 50%,transparent 50%);background-size:1px 2px"></div>
<div style="left:490px;top:759px;width:1px;height:20px;background-image:linear-gradient(to bottom,#b3bfce 50%,transparent 50%);background-size:1px 2px"></div>
<div class="t" style="left:46px;top:762px;font-size:14px;line-height:14px;color:#000;letter-spacing:0.12px;">Birra</div>
<div class="t" style="left:139px;top:762px;font-size:14px;line-height:14px;color:#000;letter-spacing:0.12px;">39678</div>
<div class="t" style="left:243px;top:762px;font-size:14px;line-height:14px;color:#000;letter-spacing:0.12px;">3...</div>
<div class="t" style="left:272.5px;top:762px;width:110px;text-align:center;font-size:14px;line-height:14px;color:#000;letter-spacing:0.12px;">Supe e gatsh...</div>
<div class="t" style="left:373px;top:762px;width:60px;text-align:right;font-size:14px;line-height:14px;color:#000;letter-spacing:0.12px;">5.00</div>
<div class="t" style="left:446px;top:762px;font-size:14px;line-height:14px;color:#000;letter-spacing:0.12px;">Cope</div>
<div class="t" style="left:489.0px;top:762px;width:70px;text-align:center;font-size:14px;line-height:14px;color:#000;letter-spacing:0.12px;">0.00</div>
<svg style="position:absolute;left:34px;top:783px" width="7" height="10" viewBox="0 0 7 10"><path d="M1 1 L5.5 5 L1 9 Z" fill="#fff" stroke="#7f8894" stroke-width="1"/></svg>
<div class="t" style="left:46px;top:782px;font-size:12px;line-height:12px;font-weight:bold;color:#111;">Kategoria:  Kafeteria</div>
<div style="left:25px;top:796px;width:536px;height:1px;background-image:linear-gradient(to right,#b3bfce 50%,transparent 50%);background-size:2px 1px"></div>
<svg style="position:absolute;left:34px;top:801px" width="7" height="10" viewBox="0 0 7 10"><path d="M1 1 L5.5 5 L1 9 Z" fill="#fff" stroke="#7f8894" stroke-width="1"/></svg>
<div class="t" style="left:46px;top:800px;font-size:12px;line-height:12px;font-weight:bold;color:#111;">Kategoria:  Kategoria</div>
<div style="left:25px;top:814px;width:536px;height:1px;background-image:linear-gradient(to right,#b3bfce 50%,transparent 50%);background-size:2px 1px"></div>
<svg style="position:absolute;left:34px;top:819px" width="7" height="10" viewBox="0 0 7 10"><path d="M1 1 L5.5 5 L1 9 Z" fill="#fff" stroke="#7f8894" stroke-width="1"/></svg>
<div class="t" style="left:46px;top:818px;font-size:12px;line-height:12px;font-weight:bold;color:#111;">Kategoria:  minibar</div>
<div style="left:25px;top:832px;width:536px;height:1px;background-image:linear-gradient(to right,#b3bfce 50%,transparent 50%);background-size:2px 1px"></div>
<svg style="position:absolute;left:34px;top:837px" width="7" height="10" viewBox="0 0 7 10"><path d="M1 1 L5.5 5 L1 9 Z" fill="#fff" stroke="#7f8894" stroke-width="1"/></svg>
<div class="t" style="left:46px;top:836px;font-size:12px;line-height:12px;font-weight:bold;color:#111;">Kategoria:  Pasta</div>
<div style="left:25px;top:850px;width:536px;height:1px;background-image:linear-gradient(to right,#b3bfce 50%,transparent 50%);background-size:2px 1px"></div>
<svg style="position:absolute;left:34px;top:855px" width="7" height="10" viewBox="0 0 7 10"><path d="M1 1 L5.5 5 L1 9 Z" fill="#fff" stroke="#7f8894" stroke-width="1"/></svg>
<div class="t" style="left:46px;top:854px;font-size:12px;line-height:12px;font-weight:bold;color:#111;">Kategoria:  perime</div>
<div style="left:25px;top:868px;width:536px;height:1px;background-image:linear-gradient(to right,#b3bfce 50%,transparent 50%);background-size:2px 1px"></div>
<svg style="position:absolute;left:34px;top:873px" width="7" height="10" viewBox="0 0 7 10"><path d="M1 1 L5.5 5 L1 9 Z" fill="#fff" stroke="#7f8894" stroke-width="1"/></svg>
<div class="t" style="left:46px;top:872px;font-size:12px;line-height:12px;font-weight:bold;color:#111;">Kategoria:  Pije Alkolike</div>
<div style="left:25px;top:886px;width:536px;height:1px;background-image:linear-gradient(to right,#b3bfce 50%,transparent 50%);background-size:2px 1px"></div>
<div style="left:24px;top:661px;width:1px;height:227px;background-image:linear-gradient(to bottom,#b3bfce 50%,transparent 50%);background-size:1px 2px"></div>
<div style="left:8px;top:143px;width:1px;height:342px;background:#9aabc3"></div>
<div style="left:560px;top:143px;width:1px;height:342px;background:#9aabc3"></div>
<div style="left:8px;top:491px;width:1px;height:397px;background:#9aabc3"></div>
<div style="left:560px;top:491px;width:1px;height:397px;background:#9aabc3"></div>
<div style="left:563px;top:142px;width:4px;height:746px;background:#c9d9ee"></div>
<div style="left:567px;top:142px;width:1346px;height:746px;border:1px solid #8d9fba;border-left:2px solid #8d9fba;border-bottom:none;background:#fff"></div>
<div style="left:569px;top:143px;width:1343px;height:23px;background:linear-gradient(#f2e2a4 0px,#fdd86c 1px,#fdd464 13px,#fff37c 21px,#fef6b8 23px)"></div>
<div style="left:569px;top:142px;width:1343px;height:1px;background:#9ea08e"></div>
<div style="left:569px;top:166px;width:1343px;height:1px;background:#8c9db4"></div>
<div class="t" style="left:575.5px;top:147px;font-size:16.5px;line-height:16.5px;font-weight:bold;color:#1c2b39;">Furnitori : Furnitor 123.</div>
<div style="left:569px;top:167px;width:1342px;height:20px;background:linear-gradient(#edf3fa 0%,#e3ebf5 50%,#d8e2ef 100%)"></div>
<div style="left:569px;top:187px;width:1342px;height:1px;background:#a5b6cd"></div>
<div style="left:586px;top:170px;width:1px;height:16px;background:#b9c8db"></div>
<div style="left:587px;top:170px;width:1px;height:16px;background:#fbfcfe"></div>
<div style="left:651px;top:170px;width:1px;height:16px;background:#b9c8db"></div>
<div style="left:652px;top:170px;width:1px;height:16px;background:#fbfcfe"></div>
<div style="left:871px;top:170px;width:1px;height:16px;background:#b9c8db"></div>
<div style="left:872px;top:170px;width:1px;height:16px;background:#fbfcfe"></div>
<div style="left:917px;top:170px;width:1px;height:16px;background:#b9c8db"></div>
<div style="left:918px;top:170px;width:1px;height:16px;background:#fbfcfe"></div>
<div style="left:953px;top:170px;width:1px;height:16px;background:#b9c8db"></div>
<div style="left:954px;top:170px;width:1px;height:16px;background:#fbfcfe"></div>
<div style="left:1081px;top:170px;width:1px;height:16px;background:#b9c8db"></div>
<div style="left:1082px;top:170px;width:1px;height:16px;background:#fbfcfe"></div>
<div style="left:1279px;top:170px;width:1px;height:16px;background:#b9c8db"></div>
<div style="left:1280px;top:170px;width:1px;height:16px;background:#fbfcfe"></div>
<div style="left:1397px;top:170px;width:1px;height:16px;background:#b9c8db"></div>
<div style="left:1398px;top:170px;width:1px;height:16px;background:#fbfcfe"></div>
<div style="left:1505px;top:170px;width:1px;height:16px;background:#b9c8db"></div>
<div style="left:1506px;top:170px;width:1px;height:16px;background:#fbfcfe"></div>
<div style="left:1683px;top:170px;width:1px;height:16px;background:#b9c8db"></div>
<div style="left:1684px;top:170px;width:1px;height:16px;background:#fbfcfe"></div>
<div style="left:1777px;top:170px;width:1px;height:16px;background:#b9c8db"></div>
<div style="left:1778px;top:170px;width:1px;height:16px;background:#fbfcfe"></div>
<div style="left:1842px;top:170px;width:1px;height:16px;background:#b9c8db"></div>
<div style="left:1843px;top:170px;width:1px;height:16px;background:#fbfcfe"></div>
<div style="left:1876px;top:170px;width:1px;height:16px;background:#b9c8db"></div>
<div style="left:1877px;top:170px;width:1px;height:16px;background:#fbfcfe"></div>
<div class="t" style="left:548.5px;top:174px;width:140px;text-align:center;font-size:11px;line-height:11px;color:#1a1a1a;letter-spacing:-0.25px;">Kodi</div>
<div class="t" style="left:691.0px;top:174px;width:140px;text-align:center;font-size:11px;line-height:11px;color:#1a1a1a;letter-spacing:-0.25px;">Artikulli</div>
<div class="t" style="left:824.5px;top:174px;width:140px;text-align:center;font-size:11px;line-height:11px;color:#1a1a1a;letter-spacing:-0.25px;">Njësia</div>
<div class="t" style="left:947.0px;top:174px;width:140px;text-align:center;font-size:11px;line-height:11px;color:#1a1a1a;letter-spacing:-0.25px;">Sasia</div>
<div class="t" style="left:1110.0px;top:174px;width:140px;text-align:center;font-size:11px;line-height:11px;color:#1a1a1a;letter-spacing:-0.25px;">Çmimi</div>
<div class="t" style="left:1268.0px;top:174px;width:140px;text-align:center;font-size:11px;line-height:11px;color:#1a1a1a;letter-spacing:-0.25px;">Vlera</div>
<div class="t" style="left:1381.0px;top:174px;width:140px;text-align:center;font-size:11px;line-height:11px;color:#1a1a1a;letter-spacing:-0.25px;">TVSH</div>
<div class="t" style="left:1524.0px;top:174px;width:140px;text-align:center;font-size:11px;line-height:11px;color:#1a1a1a;letter-spacing:-0.25px;">VleraMeTVSH</div>
<div class="t" style="left:1660.0px;top:174px;width:140px;text-align:center;font-size:11px;line-height:11px;color:#1a1a1a;letter-spacing:-0.25px;">QK</div>
<div class="t" style="left:1739.5px;top:174px;width:140px;text-align:center;font-size:11px;line-height:11px;color:#1a1a1a;letter-spacing:-0.25px;">QK</div>
<div class="t" style="left:1785.5px;top:174px;width:140px;text-align:center;font-size:11px;line-height:11px;color:#1a1a1a;letter-spacing:-0.25px;">SR</div>
<div class="t" style="left:1819.5px;top:174px;width:140px;text-align:center;font-size:11px;line-height:11px;color:#1a1a1a;letter-spacing:-0.25px;">QK</div>
<div class="t" style="left:570px;top:174px;font-size:11px;line-height:11px;color:#1a1a1a;letter-spacing:-0.25px;">N...</div>
<div class="t" style="left:922px;top:174px;font-size:11px;line-height:11px;color:#1a1a1a;letter-spacing:-0.25px;">Sh...</div>
<div style="left:569px;top:188px;width:1341px;height:20px;background:#fff"></div>
<div style="left:569px;top:207px;width:1341px;height:1px;background-image:linear-gradient(to right,#b3bfce 50%,transparent 50%);background-size:2px 1px"></div>
<div style="left:586px;top:188px;width:1px;height:20px;background-image:linear-gradient(to bottom,#b3bfce 50%,transparent 50%);background-size:1px 2px"></div>
<div style="left:651px;top:188px;width:1px;height:20px;background-image:linear-gradient(to bottom,#b3bfce 50%,transparent 50%);background-size:1px 2px"></div>
<div style="left:871px;top:188px;width:1px;height:20px;background-image:linear-gradient(to bottom,#b3bfce 50%,transparent 50%);background-size:1px 2px"></div>
<div style="left:917px;top:188px;width:1px;height:20px;background-image:linear-gradient(to bottom,#b3bfce 50%,transparent 50%);background-size:1px 2px"></div>
<div style="left:953px;top:188px;width:1px;height:20px;background-image:linear-gradient(to bottom,#b3bfce 50%,transparent 50%);background-size:1px 2px"></div>
<div style="left:1081px;top:188px;width:1px;height:20px;background-image:linear-gradient(to bottom,#b3bfce 50%,transparent 50%);background-size:1px 2px"></div>
<div style="left:1279px;top:188px;width:1px;height:20px;background-image:linear-gradient(to bottom,#b3bfce 50%,transparent 50%);background-size:1px 2px"></div>
<div style="left:1397px;top:188px;width:1px;height:20px;background-image:linear-gradient(to bottom,#b3bfce 50%,transparent 50%);background-size:1px 2px"></div>
<div style="left:1505px;top:188px;width:1px;height:20px;background-image:linear-gradient(to bottom,#b3bfce 50%,transparent 50%);background-size:1px 2px"></div>
<div style="left:1683px;top:188px;width:1px;height:20px;background-image:linear-gradient(to bottom,#b3bfce 50%,transparent 50%);background-size:1px 2px"></div>
<div style="left:1777px;top:188px;width:1px;height:20px;background-image:linear-gradient(to bottom,#b3bfce 50%,transparent 50%);background-size:1px 2px"></div>
<div style="left:1842px;top:188px;width:1px;height:20px;background-image:linear-gradient(to bottom,#b3bfce 50%,transparent 50%);background-size:1px 2px"></div>
<div style="left:1876px;top:188px;width:1px;height:20px;background-image:linear-gradient(to bottom,#b3bfce 50%,transparent 50%);background-size:1px 2px"></div>
<div class="t" style="left:570px;top:191px;font-size:14px;line-height:14px;color:#000;letter-spacing:0.12px;">...</div>
<div class="t" style="left:591px;top:191px;font-size:14px;line-height:14px;color:#000;letter-spacing:0.12px;">66671</div>
<div class="t" style="left:655px;top:191px;font-size:14px;line-height:14px;color:#000;letter-spacing:0.12px;">Birra</div>
<div class="t" style="left:877.5px;top:191px;font-size:14px;line-height:14px;color:#000;letter-spacing:0.12px;">Cope</div>
<div class="t" style="left:954.5px;top:191px;width:120px;text-align:right;font-size:14px;line-height:14px;color:#000;letter-spacing:0.12px;">24.0000</div>
<div class="t" style="left:1153.5px;top:191px;width:120px;text-align:right;font-size:14px;line-height:14px;color:#000;letter-spacing:0.12px;">150.00</div>
<div class="t" style="left:1271px;top:191px;width:120px;text-align:right;font-size:14px;line-height:14px;color:#000;letter-spacing:0.12px;">3,600.00</div>
<div class="t" style="left:1420.0px;top:191px;width:60px;text-align:center;font-size:14px;line-height:14px;color:#000;letter-spacing:0.12px;">Al</div>
<div class="t" style="left:1537px;top:191px;width:140px;text-align:right;font-size:14px;line-height:14px;color:#000;letter-spacing:0.12px;">4,320.00</div>
<div style="left:1844px;top:189px;width:31px;height:17px;border:1px solid #a2b2c8;background:linear-gradient(#f0f4fa,#dde6f2)"></div>
<div style="left:1878px;top:189px;width:31px;height:17px;border:1px solid #a2b2c8;background:linear-gradient(#f0f4fa,#dde6f2)"></div>
<div style="left:569px;top:208px;width:1341px;height:20px;background:#f0f4fa"></div>
<div style="left:569px;top:227px;width:1341px;height:1px;background-image:linear-gradient(to right,#b3bfce 50%,transparent 50%);background-size:2px 1px"></div>
<div style="left:586px;top:208px;width:1px;height:20px;background-image:linear-gradient(to bottom,#b3bfce 50%,transparent 50%);background-size:1px 2px"></div>
<div style="left:651px;top:208px;width:1px;height:20px;background-image:linear-gradient(to bottom,#b3bfce 50%,transparent 50%);background-size:1px 2px"></div>
<div style="left:871px;top:208px;width:1px;height:20px;background-image:linear-gradient(to bottom,#b3bfce 50%,transparent 50%);background-size:1px 2px"></div>
<div style="left:917px;top:208px;width:1px;height:20px;background-image:linear-gradient(to bottom,#b3bfce 50%,transparent 50%);background-size:1px 2px"></div>
<div style="left:953px;top:208px;width:1px;height:20px;background-image:linear-gradient(to bottom,#b3bfce 50%,transparent 50%);background-size:1px 2px"></div>
<div style="left:1081px;top:208px;width:1px;height:20px;background-image:linear-gradient(to bottom,#b3bfce 50%,transparent 50%);background-size:1px 2px"></div>
<div style="left:1279px;top:208px;width:1px;height:20px;background-image:linear-gradient(to bottom,#b3bfce 50%,transparent 50%);background-size:1px 2px"></div>
<div style="left:1397px;top:208px;width:1px;height:20px;background-image:linear-gradient(to bottom,#b3bfce 50%,transparent 50%);background-size:1px 2px"></div>
<div style="left:1505px;top:208px;width:1px;height:20px;background-image:linear-gradient(to bottom,#b3bfce 50%,transparent 50%);background-size:1px 2px"></div>
<div style="left:1683px;top:208px;width:1px;height:20px;background-image:linear-gradient(to bottom,#b3bfce 50%,transparent 50%);background-size:1px 2px"></div>
<div style="left:1777px;top:208px;width:1px;height:20px;background-image:linear-gradient(to bottom,#b3bfce 50%,transparent 50%);background-size:1px 2px"></div>
<div style="left:1842px;top:208px;width:1px;height:20px;background-image:linear-gradient(to bottom,#b3bfce 50%,transparent 50%);background-size:1px 2px"></div>
<div style="left:1876px;top:208px;width:1px;height:20px;background-image:linear-gradient(to bottom,#b3bfce 50%,transparent 50%);background-size:1px 2px"></div>
<div class="t" style="left:570px;top:211px;font-size:14px;line-height:14px;color:#000;letter-spacing:0.12px;">...</div>
<div class="t" style="left:591px;top:211px;font-size:14px;line-height:14px;color:#000;letter-spacing:0.12px;">6407</div>
<div class="t" style="left:655px;top:211px;font-size:14px;line-height:14px;color:#000;letter-spacing:0.12px;">Corona</div>
<div class="t" style="left:877.5px;top:211px;font-size:14px;line-height:14px;color:#000;letter-spacing:0.12px;">Cope</div>
<div class="t" style="left:954.5px;top:211px;width:120px;text-align:right;font-size:14px;line-height:14px;color:#000;letter-spacing:0.12px;">48.0000</div>
<div class="t" style="left:1153.5px;top:211px;width:120px;text-align:right;font-size:14px;line-height:14px;color:#000;letter-spacing:0.12px;">86.81</div>
<div class="t" style="left:1271px;top:211px;width:120px;text-align:right;font-size:14px;line-height:14px;color:#000;letter-spacing:0.12px;">4,166.67</div>
<div class="t" style="left:1420.0px;top:211px;width:60px;text-align:center;font-size:14px;line-height:14px;color:#000;letter-spacing:0.12px;">Al</div>
<div class="t" style="left:1537px;top:211px;width:140px;text-align:right;font-size:14px;line-height:14px;color:#000;letter-spacing:0.12px;">5,000.00</div>
<div style="left:1844px;top:209px;width:31px;height:17px;border:1px solid #a2b2c8;background:linear-gradient(#f0f4fa,#dde6f2)"></div>
<div style="left:1878px;top:209px;width:31px;height:17px;border:1px solid #a2b2c8;background:linear-gradient(#f0f4fa,#dde6f2)"></div>
<div style="left:569px;top:228px;width:1341px;height:20px;background:#fff"></div>
<div style="left:569px;top:247px;width:1341px;height:1px;background-image:linear-gradient(to right,#b3bfce 50%,transparent 50%);background-size:2px 1px"></div>
<div style="left:586px;top:228px;width:1px;height:20px;background-image:linear-gradient(to bottom,#b3bfce 50%,transparent 50%);background-size:1px 2px"></div>
<div style="left:651px;top:228px;width:1px;height:20px;background-image:linear-gradient(to bottom,#b3bfce 50%,transparent 50%);background-size:1px 2px"></div>
<div style="left:871px;top:228px;width:1px;height:20px;background-image:linear-gradient(to bottom,#b3bfce 50%,transparent 50%);background-size:1px 2px"></div>
<div style="left:917px;top:228px;width:1px;height:20px;background-image:linear-gradient(to bottom,#b3bfce 50%,transparent 50%);background-size:1px 2px"></div>
<div style="left:953px;top:228px;width:1px;height:20px;background-image:linear-gradient(to bottom,#b3bfce 50%,transparent 50%);background-size:1px 2px"></div>
<div style="left:1081px;top:228px;width:1px;height:20px;background-image:linear-gradient(to bottom,#b3bfce 50%,transparent 50%);background-size:1px 2px"></div>
<div style="left:1279px;top:228px;width:1px;height:20px;background-image:linear-gradient(to bottom,#b3bfce 50%,transparent 50%);background-size:1px 2px"></div>
<div style="left:1397px;top:228px;width:1px;height:20px;background-image:linear-gradient(to bottom,#b3bfce 50%,transparent 50%);background-size:1px 2px"></div>
<div style="left:1505px;top:228px;width:1px;height:20px;background-image:linear-gradient(to bottom,#b3bfce 50%,transparent 50%);background-size:1px 2px"></div>
<div style="left:1683px;top:228px;width:1px;height:20px;background-image:linear-gradient(to bottom,#b3bfce 50%,transparent 50%);background-size:1px 2px"></div>
<div style="left:1777px;top:228px;width:1px;height:20px;background-image:linear-gradient(to bottom,#b3bfce 50%,transparent 50%);background-size:1px 2px"></div>
<div style="left:1842px;top:228px;width:1px;height:20px;background-image:linear-gradient(to bottom,#b3bfce 50%,transparent 50%);background-size:1px 2px"></div>
<div style="left:1876px;top:228px;width:1px;height:20px;background-image:linear-gradient(to bottom,#b3bfce 50%,transparent 50%);background-size:1px 2px"></div>
<div class="t" style="left:570px;top:231px;font-size:14px;line-height:14px;color:#000;letter-spacing:0.12px;">...</div>
<div class="t" style="left:591px;top:231px;font-size:14px;line-height:14px;color:#000;letter-spacing:0.12px;">5260</div>
<div class="t" style="left:655px;top:231px;font-size:14px;line-height:14px;color:#000;letter-spacing:0.12px;">Redbull</div>
<div class="t" style="left:877.5px;top:231px;font-size:14px;line-height:14px;color:#000;letter-spacing:0.12px;">Cope</div>
<div class="t" style="left:954.5px;top:231px;width:120px;text-align:right;font-size:14px;line-height:14px;color:#000;letter-spacing:0.12px;">24.0000</div>
<div class="t" style="left:1153.5px;top:231px;width:120px;text-align:right;font-size:14px;line-height:14px;color:#000;letter-spacing:0.12px;">125.00</div>
<div class="t" style="left:1271px;top:231px;width:120px;text-align:right;font-size:14px;line-height:14px;color:#000;letter-spacing:0.12px;">3,000.00</div>
<div class="t" style="left:1420.0px;top:231px;width:60px;text-align:center;font-size:14px;line-height:14px;color:#000;letter-spacing:0.12px;">Al</div>
<div class="t" style="left:1537px;top:231px;width:140px;text-align:right;font-size:14px;line-height:14px;color:#000;letter-spacing:0.12px;">3,600.00</div>
<div style="left:1844px;top:229px;width:31px;height:17px;border:1px solid #a2b2c8;background:linear-gradient(#f0f4fa,#dde6f2)"></div>
<div style="left:1878px;top:229px;width:31px;height:17px;border:1px solid #a2b2c8;background:linear-gradient(#f0f4fa,#dde6f2)"></div>
<div style="left:569px;top:248px;width:1341px;height:4px;background:linear-gradient(#f4f7fb,#dbe6f3)"></div>
<div style="left:569px;top:252px;width:1341px;height:20px;background:#a9caee"></div>
<div style="left:569px;top:252px;width:1341px;height:1px;background-image:linear-gradient(to right,#222 50%,transparent 50%);background-size:2px 1px"></div>
<div style="left:569px;top:271px;width:1341px;height:1px;background-image:linear-gradient(to right,#222 50%,transparent 50%);background-size:2px 1px"></div>
<div style="left:586px;top:253px;width:1px;height:18px;background-image:linear-gradient(to bottom,#e8f0fa 50%,transparent 50%);background-size:1px 2px"></div>
<div style="left:651px;top:253px;width:1px;height:18px;background-image:linear-gradient(to bottom,#e8f0fa 50%,transparent 50%);background-size:1px 2px"></div>
<div style="left:871px;top:253px;width:1px;height:18px;background-image:linear-gradient(to bottom,#e8f0fa 50%,transparent 50%);background-size:1px 2px"></div>
<div style="left:917px;top:253px;width:1px;height:18px;background-image:linear-gradient(to bottom,#e8f0fa 50%,transparent 50%);background-size:1px 2px"></div>
<div style="left:953px;top:253px;width:1px;height:18px;background-image:linear-gradient(to bottom,#e8f0fa 50%,transparent 50%);background-size:1px 2px"></div>
<div style="left:1081px;top:253px;width:1px;height:18px;background-image:linear-gradient(to bottom,#e8f0fa 50%,transparent 50%);background-size:1px 2px"></div>
<div style="left:1279px;top:253px;width:1px;height:18px;background-image:linear-gradient(to bottom,#e8f0fa 50%,transparent 50%);background-size:1px 2px"></div>
<div style="left:1397px;top:253px;width:1px;height:18px;background-image:linear-gradient(to bottom,#e8f0fa 50%,transparent 50%);background-size:1px 2px"></div>
<div style="left:1505px;top:253px;width:1px;height:18px;background-image:linear-gradient(to bottom,#e8f0fa 50%,transparent 50%);background-size:1px 2px"></div>
<div style="left:1683px;top:253px;width:1px;height:18px;background-image:linear-gradient(to bottom,#e8f0fa 50%,transparent 50%);background-size:1px 2px"></div>
<div style="left:1777px;top:253px;width:1px;height:18px;background-image:linear-gradient(to bottom,#e8f0fa 50%,transparent 50%);background-size:1px 2px"></div>
<div style="left:1842px;top:253px;width:1px;height:18px;background-image:linear-gradient(to bottom,#e8f0fa 50%,transparent 50%);background-size:1px 2px"></div>
<div style="left:1876px;top:253px;width:1px;height:18px;background-image:linear-gradient(to bottom,#e8f0fa 50%,transparent 50%);background-size:1px 2px"></div>
<div class="t" style="left:1252px;top:256px;width:140px;text-align:right;font-size:14px;line-height:14px;color:#000;letter-spacing:0.12px;">10,766.67</div>
<div class="t" style="left:1538px;top:256px;width:140px;text-align:right;font-size:14px;line-height:14px;color:#000;letter-spacing:0.12px;">12,920.00</div>
<div style="left:569px;top:273px;width:1341px;height:1px;background-image:linear-gradient(to right,#e6ebf2 50%,transparent 50%);background-size:2px 1px"></div>
<div style="left:1911px;top:167px;width:1px;height:721px;background:#8d9bb0"></div>
<div style="left:1912px;top:142px;width:1px;height:746px;background:#8a99ad"></div>
<svg style="position:absolute;left:1242px;top:293px" width="14" height="21" viewBox="0 0 14 21">
<path d="M0.8 0.8 L0.8 16.2 L4.3 12.9 L7.2 18.4 Q8.2 19.3 9.5 18.3 L7.3 12.3 L11.6 11.9 Z" fill="#fff" stroke="#000" stroke-width="1.1" stroke-linejoin="round"/>
</svg>
</body></html>
